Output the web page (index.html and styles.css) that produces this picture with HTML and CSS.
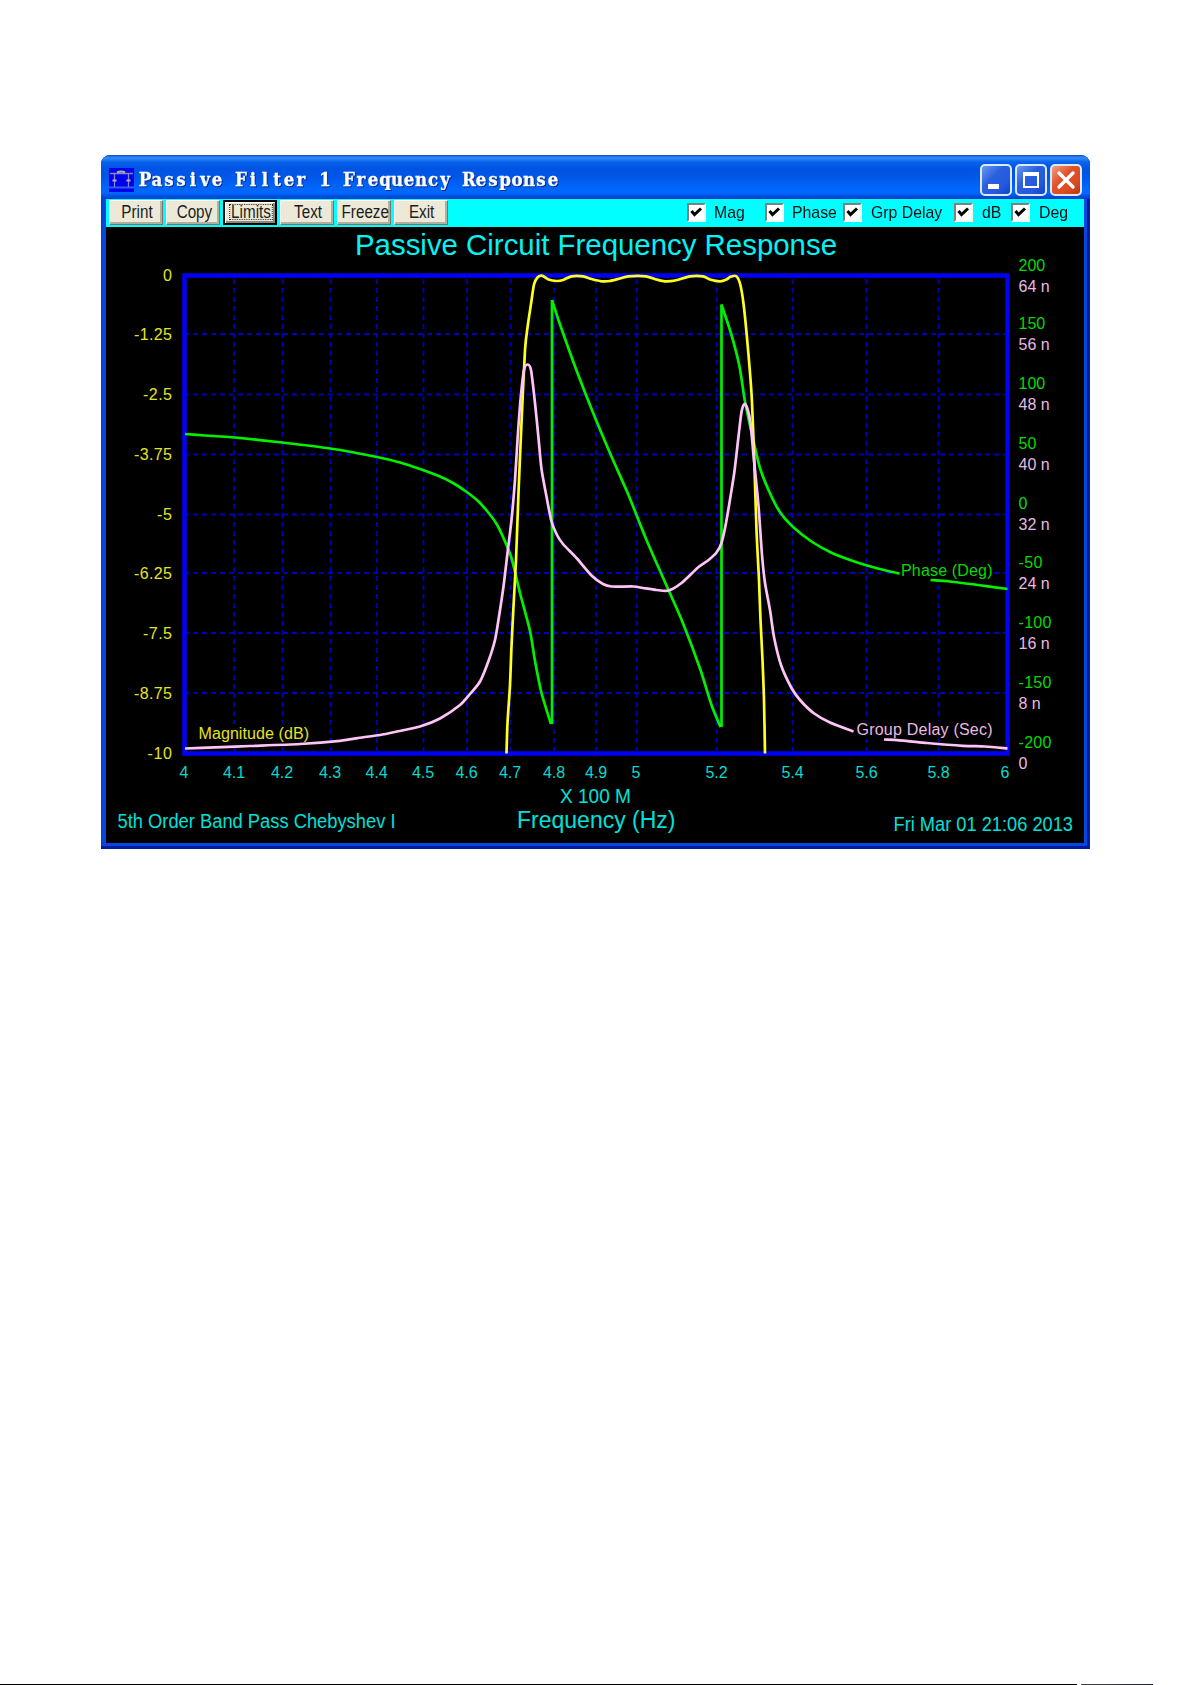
FILE: index.html
```html
<!DOCTYPE html>
<html lang="en">
<head>
    <meta charset="UTF-8">
    <meta name="viewport" content="width=device-width, initial-scale=1.0">
    <title>Passive Filter 1 Frequency Response</title>
    <link rel="stylesheet" href="styles.css">
</head>
<body>
    <div class="window">
        <div class="titlebar">
            <svg class="app-icon" width="25" height="24" viewBox="0 0 25 24">
                <rect width="25" height="24" fill="#0000f0"/>
                <path d="M0 19.5H25" stroke="#2a62f0" stroke-width="2"/>
                <path d="M1 5.5H24M5.5 5.5V19M19.5 5.5V19" fill="none" stroke="#8585c8" stroke-width="1.3"/>
                <path d="M8 4.5Q12 2.5 16 4.5M3.5 12.5H7.5M17.5 12.5H21.5" fill="none" stroke="#b8b09a" stroke-width="2"/>
            </svg>
            <svg class="caption" width="430" height="32" viewBox="0 0 430 32">
                <text y="21.500" x="6 18 30 42 54 66 78 90 102 114 126 138 150 162 174 186 198 210 222 234 246 258 270 282 294 306 318 330 342 354 366 378 390 402 414">Passive Filter 1 Frequency Response</text>
            </svg>
            <div class="window-buttons">
                <button class="win-btn"><svg width="28" height="28" viewBox="0 0 28 28"><path d="M6 20.5H17" stroke="#fff" stroke-width="5"/></svg></button>
                <button class="win-btn"><svg width="28" height="28" viewBox="0 0 28 28"><path d="M7 7.5H21V21H7Z" fill="none" stroke="#fff" stroke-width="2"/><path d="M6 8H22" stroke="#fff" stroke-width="4"/></svg></button>
                <button class="win-btn close"><svg width="28" height="28" viewBox="0 0 28 28"><path d="M7 7L21 21M21 7L7 21" stroke="#fff" stroke-width="3.4" stroke-linecap="round"/></svg></button>
            </div>
        </div>

        <div class="toolbar">
            <button class="tool"><span>Print</span></button>
            <button class="tool"><span>Copy</span></button>
            <button class="tool active"><span>Limits</span></button>
            <button class="tool"><span>Text</span></button>
            <button class="tool"><span>Freeze</span></button>
            <button class="tool"><span>Exit</span></button>

            <div class="checks">
                <label class="check mag"><i class="box"><svg width="15" height="15" viewBox="0 0 15 15"><path d="M2.5 6L5.5 9.5L12 3.5"/></svg></i><span>Mag</span></label>
                <label class="check phase"><i class="box"><svg width="15" height="15" viewBox="0 0 15 15"><path d="M2.5 6L5.5 9.5L12 3.5"/></svg></i><span>Phase</span></label>
                <label class="check delay"><i class="box"><svg width="15" height="15" viewBox="0 0 15 15"><path d="M2.5 6L5.5 9.5L12 3.5"/></svg></i><span>Grp Delay</span></label>
                <label class="check db"><i class="box"><svg width="15" height="15" viewBox="0 0 15 15"><path d="M2.5 6L5.5 9.5L12 3.5"/></svg></i><span>dB</span></label>
                <label class="check deg"><i class="box"><svg width="15" height="15" viewBox="0 0 15 15"><path d="M2.5 6L5.5 9.5L12 3.5"/></svg></i><span>Deg</span></label>
            </div>
        </div>

        <svg class="chart" width="978" height="616" viewBox="106 227 978 616">
            <text class="title" x="355" y="255" textLength="482" lengthAdjust="spacingAndGlyphs">Passive Circuit Frequency Response</text>

            <!-- grid -->
            <path class="grid" d="M234 279V751M282.5 279V751M330.5 279V751M377 279V751M423.5 279V751M467 279V751M510.5 279V751M554 279V751M596 279V751M636.5 279V751M716.5 279V751M792.5 279V751M866.5 279V751M938.5 279V751"/>
            <path class="grid" d="M184 334H1006M184 394.5H1006M184 454.5H1006M184 514.5H1006M184 573H1006M184 633H1006M184 693H1006"/>
            <rect class="frame" x="184.5" y="275.5" width="823" height="478"/>

            <!-- label backgrounds cut the grid -->
            <rect x="198" y="724" width="112" height="19"/>
            <rect x="900" y="561" width="94" height="18"/>
            <rect x="855" y="721" width="139" height="18"/>

            <g id="curves">
                <path class="line phase-line" data-points="185,434 205,435.5 235,437.5 282,442.5 330,448.5 377,457 400,462.5 420,469 440,476.5 453,483 466,491.5 478,501 487,511 496,523 503.5,538 511.5,558 520,593 530,631 535,661 541.5,693 551,724"/>
                <path class="line phase-line" data-points="552,724 552,300"/>
                <path class="line phase-line" data-points="552,300 559.5,323 576,369 595,417.5 611.5,456.5 628.5,495 646.5,540 668.5,590 682.5,622 700,668.5 711.5,705 720.5,727"/>
                <path class="line phase-line" data-points="721.5,727 721.5,304.5"/>
                <path class="line phase-line" data-points="721.5,304.5 731.5,335 739.5,366.5 745,401.5 753.5,441 760,468 768.5,490 779.5,511.5 792.5,526.5 811.5,541.5 831,552.5 850,560 867,565.5 890,571.5 899.5,573.5"/>
                <path class="line phase-line" data-points="930.5,580 950,581.5 978,585 1007.5,589"/>

                <path class="line mag-line" data-points="506.5,753.5 507.5,723 510,685 511.5,646.5 513.5,606.5 516,560 518.5,493 521.5,423 525,350 528,324 531,304 534,284.5 537.5,277.5 542.5,275.8 548.5,279.5 556.5,281 563,280 571.5,276.3 583,276.3 591.5,279 601.5,281.3 610,281 620,278.5 628.5,276.3 646,276.3 656.5,279.5 665,281.3 675,280.5 690,276.3 703,276.3 710,279.5 720,281.3 726.5,279.5 730.5,276.8 736,276 740,283.5 743.5,303.5 747.5,343.5 751.5,393.5 754,453 756.5,530 759,580 760.5,620 762.5,660 764,700 765,753.5"/>

                <path class="line delay-line" data-points="185,748.5 215,747.3 250,746 300,744 340,740.8 362,737.5 380,735 395,732 420,726.5 440,718.5 460,705 470,694 480,681.5 488.5,661 495,640 499,616.5 503.5,586.5 507.5,553 511.5,520 515,480 517.5,440 520.5,400 524,370 527.5,364.5 531,370 535,403 538.5,438 541.5,469 546.5,496.5 551.5,521.5 557,535 563,544 576.5,558 591.5,575.5 603,584 611.5,586.5 633.5,586.5 643,588 656.5,590 668.5,590.5 681.5,583 698,567.5 708,560.5 716.5,552.5 721.5,543 726,523 730.5,496.5 734.5,471 738.5,436.5 741.5,412 744.5,404 747.5,409 750.5,423 753.5,455 758.5,506 762,555 765,583 770,610 774,637 781,665 791.5,688 800,700 813.5,713 830,722.5 853.5,731.5"/>
                <path class="line delay-line" data-points="884,739.5 906,740.8 927,743 963,745.8 985,746.5 1007.5,748.5"/>
            </g>

            <g class="mag-text" text-anchor="end">
                <text x="172" y="281">0</text>
                <text x="172" y="340" textLength="38">-1.25</text>
                <text x="172" y="400" textLength="29">-2.5</text>
                <text x="172" y="460" textLength="38">-3.75</text>
                <text x="172" y="520" textLength="15">-5</text>
                <text x="172" y="579" textLength="38">-6.25</text>
                <text x="172" y="639" textLength="29">-7.5</text>
                <text x="172" y="699" textLength="38">-8.75</text>
                <text x="172" y="759" textLength="24.500">-10</text>
            </g>
            <g class="phase-text">
                <text x="1018.500" y="270.500">200</text>
                <text x="1018.500" y="329">150</text>
                <text x="1018.500" y="389">100</text>
                <text x="1018.500" y="449">50</text>
                <text x="1018.500" y="509">0</text>
                <text x="1018.500" y="568" textLength="24">-50</text>
                <text x="1018.500" y="628" textLength="33">-100</text>
                <text x="1018.500" y="688" textLength="33">-150</text>
                <text x="1018.500" y="748" textLength="33">-200</text>
            </g>
            <g class="delay-text">
                <text x="1018.500" y="291.500">64 n</text>
                <text x="1018.500" y="350">56 n</text>
                <text x="1018.500" y="410">48 n</text>
                <text x="1018.500" y="470">40 n</text>
                <text x="1018.500" y="530">32 n</text>
                <text x="1018.500" y="589">24 n</text>
                <text x="1018.500" y="649">16 n</text>
                <text x="1018.500" y="709">8 n</text>
                <text x="1018.500" y="769">0</text>
            </g>
            <g class="freq-text" text-anchor="middle">
                <text x="184" y="778">4</text>
                <text x="234" y="778">4.1</text>
                <text x="282" y="778">4.2</text>
                <text x="330" y="778">4.3</text>
                <text x="376.5" y="778">4.4</text>
                <text x="423" y="778">4.5</text>
                <text x="466.5" y="778">4.6</text>
                <text x="510" y="778">4.7</text>
                <text x="554" y="778">4.8</text>
                <text x="596" y="778">4.9</text>
                <text x="636" y="778">5</text>
                <text x="716.5" y="778">5.2</text>
                <text x="792.5" y="778">5.4</text>
                <text x="866.5" y="778">5.6</text>
                <text x="938.5" y="778">5.8</text>
                <text x="1005" y="778">6</text>
            </g>
            <text class="mag-text" x="198.5" y="739" textLength="110.5">Magnitude (dB)</text>
            <text class="phase-text" x="901" y="575.5" textLength="91.5">Phase (Deg)</text>
            <text class="delay-text" x="856.5" y="734.5" textLength="136">Group Delay (Sec)</text>

            <text class="note" x="560" y="802.5" textLength="71" lengthAdjust="spacingAndGlyphs">X 100 M</text>
            <text class="axis-title" x="517" y="827.5" textLength="158.5" lengthAdjust="spacingAndGlyphs">Frequency (Hz)</text>
            <text class="note" x="117.5" y="828" textLength="278" lengthAdjust="spacingAndGlyphs">5th Order Band Pass Chebyshev I</text>
            <text class="note" x="893.5" y="830.5" textLength="179.5" lengthAdjust="spacingAndGlyphs">Fri Mar 01 21:06 2013</text>
        </svg>
    </div>

    <div class="page-edge"></div>

    <script>
        // Draw each curve as a smooth line through its points
        document.querySelectorAll('#curves path').forEach(path => {
            const pts = path.dataset.points.split(' ').map(p => p.split(',').map(Number));
            let d = `M${pts[0]}`;
            for (let i = 0; i < pts.length - 1; i++) {
                const a = pts[i - 1] || pts[i];
                const b = pts[i];
                const c = pts[i + 1];
                const e = pts[i + 2] || c;
                d += `C${b[0] + (c[0] - a[0]) / 8},${b[1] + (c[1] - a[1]) / 8}`;
                d += ` ${c[0] - (e[0] - b[0]) / 8},${c[1] - (e[1] - b[1]) / 8} ${c}`;
            }
            path.setAttribute('d', d);
        });
    </script>
</body>
</html>
```
FILE: styles.css
```css
* {
    box-sizing: border-box;
}

body {
    margin: 0;
    height: 1685px;
    padding-top: 155px;
    display: flex;
    flex-direction: column;
    background: #fff;
    font-family: "Liberation Sans", Arial, sans-serif;
}

.window {
    width: 989.500px;
    height: 694px;
    margin-left: 100.500px;
    padding: 0 6px 6px 5.500px;
    border-radius: 9px 9px 0 0;
    background: #0847dd;
    box-shadow: inset -3px -3px 0 #001c9c, inset 1px 0 0 #0838c0;
    overflow: hidden;
}

.titlebar {
    display: flex;
    align-items: center;
    height: 44px;
    margin: 0 -6px 0 -5.500px;
    padding: 4px 8px 0;
    background: linear-gradient(#0a49c0 0, #2b85f8 5%, #2b85f8 8%, #0863ec 16%, #0054e3 30%, #0056e8 50%, #0066fc 75%, #0068ff 86%, #0054e8 92%, #003cc0 100%);
}

.app-icon {
    margin-top: 2px;
}

.caption {
    margin-top: 2px;
    margin-left: 5px;
    fill: #fff;
    stroke: #fff;
    stroke-width: .3;
    font: bold 18.5px "DejaVu Serif Condensed", "DejaVu Serif", serif;
    font-stretch: condensed;
    text-anchor: middle;
    filter: drop-shadow(1px 1px 0 #0a2c90);
}

.window-buttons {
    display: flex;
    gap: 3px;
    margin-left: auto;
    margin-top: 1px;
}

.win-btn {
    width: 32px;
    height: 32px;
    padding: 0;
    border: 2px solid #dce8fc;
    border-radius: 5px;
    background: linear-gradient(135deg, #6b98f4, #2a60dc 40%, #245be0 70%, #1046c4);
}

.win-btn svg {
    display: block;
}

.win-btn.close {
    background: linear-gradient(135deg, #f0a080, #e0522c 40%, #dc4b22 70%, #b83810);
}

.toolbar {
    display: flex;
    gap: 3px;
    height: 28px;
    padding: 1px 0 0 3px;
    background: #00ffff;
    font-size: 17px;
    color: #101010;
}

.tool {
    width: 54px;
    height: 25px;
    padding: 0;
    border: 1px solid;
    border-color: #fff #77756a #77756a #fff;
    background: #ece9d8;
    box-shadow: inset -2px -2px 0 #b3af9f;
    color: #1c1c1c;
    font: 17.5px/21px "Liberation Sans", Arial, sans-serif;
    white-space: nowrap;
}

.tool span {
    display: inline-block;
    margin: 0 -4px;
    transform: translateX(1px) scaleX(.87);
}

.tool.active {
    border: 2px solid #000;
    box-shadow: inset 1px 1px 0 #fff, inset -2px -2px 0 #8c897c;
}

.tool.active span {
    width: 50px;
    height: 16px;
    line-height: 15px;
    border: 1px dotted #222;
}

.checks {
    display: flex;
    margin-left: auto;
    padding-top: 2.500px;
}

.check {
    display: flex;
    gap: 8.500px;
    line-height: 19px;
    white-space: nowrap;
}

.check span {
    transform: scaleX(.93);
    transform-origin: 0 0;
}

.box {
    width: 19px;
    height: 19px;
    border: 2px solid;
    border-color: #7c8080 #f4f4f4 #f4f4f4 #7c8080;
    background: #fff;
}

.box svg {
    display: block;
}

.box path {
    fill: none;
    stroke: #000;
    stroke-width: 3;
}

.check.mag {
    width: 78px;
}

.check.phase {
    width: 78.5px;
}

.check.delay {
    width: 111px;
}

.check.db {
    width: 57px;
}

.check.deg {
    width: 73px;
}

.chart {
    display: block;
    background: #000;
    font-size: 16px;
}

.grid {
    stroke: #0000b8;
    stroke-width: 1.8;
    stroke-dasharray: 5 4;
}

.frame {
    fill: none;
    stroke: #0000f4;
    stroke-width: 4.5;
}

.line {
    fill: none;
    stroke-width: 2.7;
    stroke-linejoin: round;
}

.phase-line {
    stroke: #00f000;
}

.mag-line {
    stroke: #ffff20;
}

.delay-line {
    stroke: #ffc4f8;
}

.mag-text {
    fill: #e4e420;
}

.phase-text {
    fill: #00dc00;
}

.delay-text {
    fill: #e8bae2;
}

.freq-text {
    fill: #00dcd0;
}

.title {
    fill: #00f4f4;
    font-size: 30px;
}

.note {
    fill: #00e0d8;
    font-size: 19.5px;
}

.axis-title {
    fill: #00e0d8;
    font-size: 23.5px;
}

/* bottom rule of the page */
.page-edge {
    width: 1153px;
    height: 1px;
    margin-top: auto;
    background: linear-gradient(to right, #000 1077px, #fff 1077px, #fff 1081px, #444 1081px, #223 1153px);
}
```
